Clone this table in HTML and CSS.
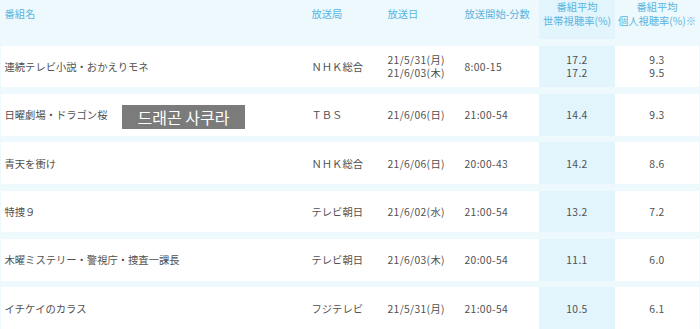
FILE: index.html
```html
<!DOCTYPE html>
<html lang="ja">
<head>
<meta charset="utf-8">
<link rel="stylesheet" href="styles.css">
</head>
<body>
<div class="ratings">
  <div class="row head">
    <div class="cell">番組名</div>
    <div class="cell">放送局</div>
    <div class="cell">放送日</div>
    <div class="cell">放送開始-分数</div>
    <div class="cell num hh">番組平均<br>世帯視聴率(%)</div>
    <div class="cell num">番組平均<br>個人視聴率(%)※</div>
  </div>
  <div class="row">
    <div class="cell">連続テレビ小説・おかえりモネ</div>
    <div class="cell">ＮＨＫ総合</div>
    <div class="cell fig">21/5/31(月)<br>21/6/03(木)</div>
    <div class="cell fig">8:00-15</div>
    <div class="cell num fig hh">17.2<br>17.2</div>
    <div class="cell num fig">9.3<br>9.5</div>
  </div>
  <div class="row">
    <div class="cell">日曜劇場・ドラゴン桜<span class="caption">드래곤 사쿠라</span></div>
    <div class="cell">ＴＢＳ</div>
    <div class="cell fig">21/6/06(日)</div>
    <div class="cell fig">21:00-54</div>
    <div class="cell num fig hh">14.4</div>
    <div class="cell num fig">9.3</div>
  </div>
  <div class="row">
    <div class="cell">青天を衝け</div>
    <div class="cell">ＮＨＫ総合</div>
    <div class="cell fig">21/6/06(日)</div>
    <div class="cell fig">20:00-43</div>
    <div class="cell num fig hh">14.2</div>
    <div class="cell num fig">8.6</div>
  </div>
  <div class="row">
    <div class="cell">特捜９</div>
    <div class="cell">テレビ朝日</div>
    <div class="cell fig">21/6/02(水)</div>
    <div class="cell fig">21:00-54</div>
    <div class="cell num fig hh">13.2</div>
    <div class="cell num fig">7.2</div>
  </div>
  <div class="row">
    <div class="cell">木曜ミステリー・警視庁・捜査一課長</div>
    <div class="cell">テレビ朝日</div>
    <div class="cell fig">21/6/03(木)</div>
    <div class="cell fig">20:00-54</div>
    <div class="cell num fig hh">11.1</div>
    <div class="cell num fig">6.0</div>
  </div>
  <div class="row">
    <div class="cell">イチケイのカラス</div>
    <div class="cell">フジテレビ</div>
    <div class="cell fig">21/5/31(月)</div>
    <div class="cell fig">21:00-54</div>
    <div class="cell num fig hh">10.5</div>
    <div class="cell num fig">6.1</div>
  </div>
</div>
</body>
</html>
```
FILE: styles.css
```css
html, body {
  margin: 0;
  padding: 0;
  background: #eef9fd;
}
body {
  width: 700px;
  height: 329px;
  overflow: hidden;
  font-family: "Noto Sans CJK JP", "Noto Sans", sans-serif;
  font-size: 10.3px;
  color: #505050;
}
.ratings {
  display: flex;
  flex-direction: column;
  gap: 6.667px;
  padding: 0 1px;
}
.row {
  display: grid;
  grid-template-columns: 307px 76px 77px 78px 76px 84px;
  height: 41.667px;
  background: #fff;
  line-height: 13px;
}
.row.head {
  height: 39px;
  background: transparent;
  color: #5ab4dd;
}
.cell {
  display: flex;
  align-items: center;
  padding-left: 3.5px;
  position: relative;
  white-space: nowrap;
}
.fig {
  letter-spacing: 0.35px;
}
.head .cell {
  padding-bottom: 11px;
  line-height: 14px;
}
.cell.num {
  justify-content: center;
  text-align: center;
  padding-left: 0;
}
.hh {
  background: #e2f5fd;
}
.caption {
  position: absolute;
  left: 121px;
  top: 11px;
  width: 123px;
  height: 24px;
  background: #7b7b7b;
  color: #fff;
  font-family: "Noto Sans CJK KR", sans-serif;
  font-size: 16px;
  line-height: 24px;
  letter-spacing: 0;
  text-align: center;
}
```
